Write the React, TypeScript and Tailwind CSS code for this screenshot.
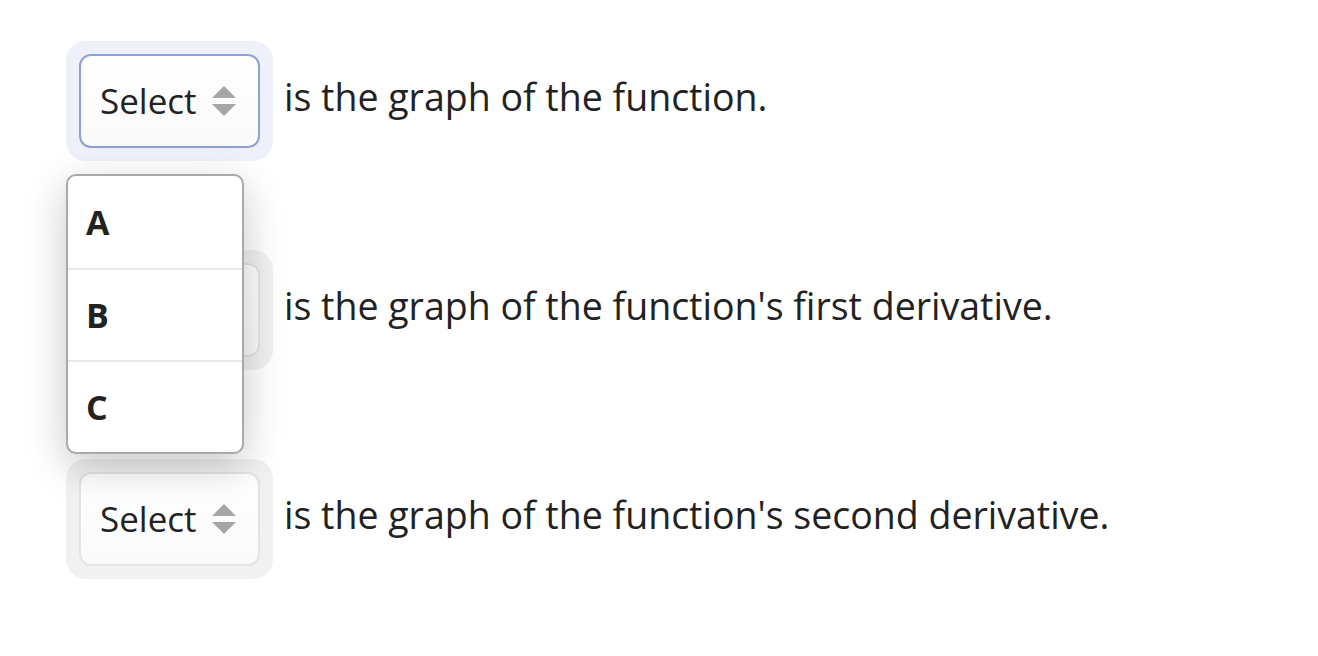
import { ReactNode } from 'react'

function Arrows() {
  return (
    <svg width="24" height="32" viewBox="0 0 24 32" className="shrink-0">
      <polygon points="12,1 24,13 0,13" fill="#a6a6a6" />
      <polygon points="0,19 24,19 12,31" fill="#a6a6a6" />
    </svg>
  )
}

function SelectBox({ focused }: { focused?: boolean }) {
  return (
    <div className={`rounded-[20px] p-[13px] ${focused ? 'bg-[#eef1fa]' : 'bg-[#f1f1f1]'}`}>
      <div
        className={`flex h-[94px] w-[181px] items-center gap-[15px] rounded-[12px] border-2 bg-gradient-to-b from-white to-[#fafafa] pl-[19px] ${
          focused ? 'border-[#8fa0d9]' : 'border-[#e4e4e4]'
        }`}
      >
        <span className="text-[35px] text-[#222]">Select</span>
        <Arrows />
      </div>
    </div>
  )
}

function Row({ children, focused }: { children: ReactNode; focused?: boolean }) {
  return (
    <div className="flex items-center gap-[11px]">
      <SelectBox focused={focused} />
      <span className="text-[37.5px] text-[#222] pb-[8px]">{children}</span>
    </div>
  )
}

export default function App() {
  return (
    <div
      className="relative min-h-screen bg-white pl-[66px] pt-[41px]"
      style={{ fontFamily: '"Open Sans", "Noto Sans", sans-serif' }}
    >
      <div className="flex flex-col gap-[89px]">
        <Row focused>is the graph of the function.</Row>
        <Row>is the graph of the function's first derivative.</Row>
        <Row>is the graph of the function's second derivative.</Row>
      </div>

      <div className="absolute left-[66px] top-[174px] w-[178px] overflow-hidden rounded-[10px] border-2 border-[#a9a9a9] bg-white shadow-[0_12px_40px_rgba(0,0,0,0.22)]">
        {['A', 'B', 'C'].map((l, i) => (
          <div
            key={l}
            className={`flex h-[92px] items-center pl-[18px] text-[34px] font-bold text-[#222] ${
              i > 0 ? 'border-t-2 border-[#e8e8e8]' : ''
            }`}
          >
            {l}
          </div>
        ))}
      </div>
    </div>
  )
}
